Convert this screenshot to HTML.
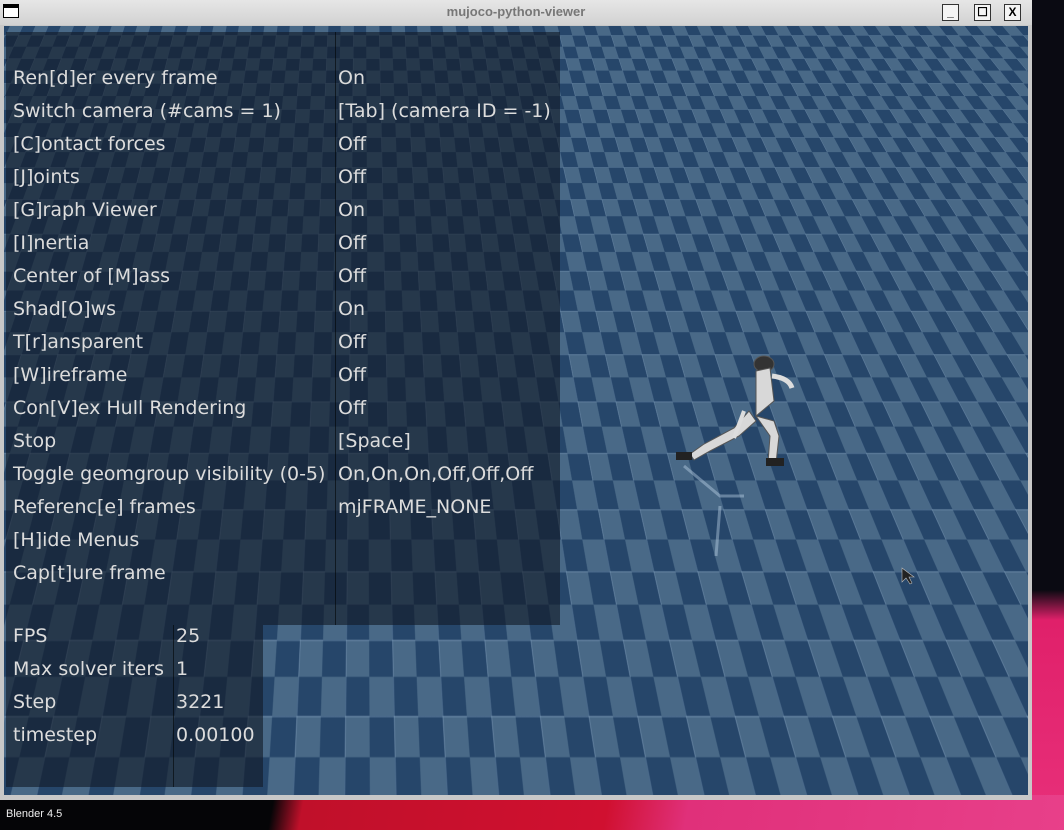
<!DOCTYPE html>
<html><head><style>
*{margin:0;padding:0;box-sizing:border-box}
html,body{width:1064px;height:830px;overflow:hidden}
body{background:#050507;position:relative;font-family:"DejaVu Sans","Liberation Sans",sans-serif}
.desk-r{position:absolute;left:1030px;top:0;width:34px;height:830px;background:linear-gradient(#0a0a12 0,#0a0a12 590px,#e0206a 620px,#e8307a 830px)}
.desk-b{position:absolute;left:0;top:795px;width:1064px;height:35px;background:linear-gradient(100deg,#050507 0,#050507 270px,#c0102a 300px,#d01030 600px,#e0307a 680px,#e8408a 1064px)}
.blender{position:absolute;left:6px;top:808px;font:11px "Liberation Sans",sans-serif;color:#eee}
.win{position:absolute;left:0;top:0;width:1032px;height:800px;background:#c8c8c8}
.title{position:absolute;left:0;top:0;width:1032px;height:25px;background:linear-gradient(#e6e6e6,#d2d2d2);text-align:center;font:bold 13px "Liberation Sans",sans-serif;color:#777;line-height:24px}
.ic{position:absolute;top:4px;width:17px;height:17px;border:1px solid #333;background:#f4f4f4;font:bold 12px "Liberation Sans";color:#000;line-height:15px;text-align:center}
.view{position:absolute;left:4px;top:26px;width:1024px;height:769px;overflow:hidden;clip-path:inset(0);background:#3a5a7c;perspective:800px;perspective-origin:35% -400px}
.plane{position:absolute;left:-2000px;bottom:-20px;width:5000px;height:5000px;transform-origin:50% 100%;transform:rotateX(66deg);
background-color:#496987;
background-image:linear-gradient(rgba(140,170,200,.35) 1px,transparent 1px),linear-gradient(90deg,rgba(140,170,200,.35) 1px,transparent 1px),conic-gradient(#26466a 25%,transparent 0 50%,#26466a 0 75%,transparent 0);
background-size:52px 52px,52px 52px,52px 52px}
.panel{position:absolute;background:rgba(18,26,38,.62);color:#e4e4e4;font-size:19px}
.row{position:absolute;height:33px;line-height:33px;white-space:nowrap}
.div{position:absolute;top:0;bottom:0;width:1px;background:rgba(0,0,0,.55)}
</style></head><body>
<div class="desk-r"></div>
<div class="desk-b"></div>
<div class="blender">Blender 4.5</div>
<div class="win">
 <div class="title">mujoco-python-viewer</div>
 <div style="position:absolute;left:3px;top:4px;width:16px;height:14px;border:1px solid #000;background:#fff;border-top:4px solid #000"></div>
 <div class="ic" style="left:942px">_</div>
 <div class="ic" style="left:974px">☐</div>
 <div class="ic" style="left:1004px">X</div>
 <div class="view">
  <div class="plane"></div>
  <svg style="position:absolute;left:0;top:0" width="1024" height="769">
   <g fill="#d8d8d8" stroke="#555" stroke-width="1">
    <ellipse cx="760" cy="338" rx="10" ry="8" fill="#333"/>
    <path d="M752 345 L766 342 L770 375 L752 390 Z"/>
    <path d="M768 350 Q785 352 788 362" fill="none" stroke="#ddd" stroke-width="5"/>
    <path d="M745 385 L730 402 L700 418 L686 428 L690 434 L706 425 L735 410 L752 395 Z"/>
    <path d="M752 390 L770 395 L775 410 L772 437 L764 437 L766 410 Z"/>
    <path d="M740 385 L730 412" stroke="#ddd" stroke-width="4"/>
   </g>
   <rect x="672" y="426" width="16" height="8" fill="#222"/>
   <rect x="762" y="432" width="18" height="8" fill="#222"/>
   <path d="M680 440 L716 470 L740 470 M716 480 L712 530" stroke="rgba(200,220,240,.4)" stroke-width="3" fill="none"/>
   <path d="M898 542 L898 556 L902 552 L906 558 L908 557 L905 551 L910 551 Z" fill="#222" stroke="#bbb" stroke-width=".6"/>
  </svg>
  <div class="panel" style="left:2px;top:6px;width:554px;height:593px">
   <div class="div" style="left:329px"></div>
  </div>
  <div class="panel" style="left:2px;top:599px;width:257px;height:162px">
   <div class="div" style="left:167px"></div>
  </div>
  <div style="position:absolute;left:0;top:0;color:#dcdcdc;font-size:19px">
   <div class="row" style="left:9px;top:36px">Ren[d]er every frame</div><div class="row" style="left:334px;top:36px">On</div>
   <div class="row" style="left:9px;top:69px">Switch camera (#cams = 1)</div><div class="row" style="left:334px;top:69px">[Tab] (camera ID = -1)</div>
   <div class="row" style="left:9px;top:102px">[C]ontact forces</div><div class="row" style="left:334px;top:102px">Off</div>
   <div class="row" style="left:9px;top:135px">[J]oints</div><div class="row" style="left:334px;top:135px">Off</div>
   <div class="row" style="left:9px;top:168px">[G]raph Viewer</div><div class="row" style="left:334px;top:168px">On</div>
   <div class="row" style="left:9px;top:201px">[I]nertia</div><div class="row" style="left:334px;top:201px">Off</div>
   <div class="row" style="left:9px;top:234px">Center of [M]ass</div><div class="row" style="left:334px;top:234px">Off</div>
   <div class="row" style="left:9px;top:267px">Shad[O]ws</div><div class="row" style="left:334px;top:267px">On</div>
   <div class="row" style="left:9px;top:300px">T[r]ansparent</div><div class="row" style="left:334px;top:300px">Off</div>
   <div class="row" style="left:9px;top:333px">[W]ireframe</div><div class="row" style="left:334px;top:333px">Off</div>
   <div class="row" style="left:9px;top:366px">Con[V]ex Hull Rendering</div><div class="row" style="left:334px;top:366px">Off</div>
   <div class="row" style="left:9px;top:399px">Stop</div><div class="row" style="left:334px;top:399px">[Space]</div>
   <div class="row" style="left:9px;top:432px">Toggle geomgroup visibility (0-5)</div><div class="row" style="left:334px;top:432px">On,On,On,Off,Off,Off</div>
   <div class="row" style="left:9px;top:465px">Referenc[e] frames</div><div class="row" style="left:334px;top:465px">mjFRAME_NONE</div>
   <div class="row" style="left:9px;top:498px">[H]ide Menus</div>
   <div class="row" style="left:9px;top:531px">Cap[t]ure frame</div>
   <div class="row" style="left:9px;top:594px">FPS</div><div class="row" style="left:172px;top:594px">25</div>
   <div class="row" style="left:9px;top:627px">Max solver iters</div><div class="row" style="left:172px;top:627px">1</div>
   <div class="row" style="left:9px;top:660px">Step</div><div class="row" style="left:172px;top:660px">3221</div>
   <div class="row" style="left:9px;top:693px">timestep</div><div class="row" style="left:172px;top:693px">0.00100</div>
  </div>
 </div>
</div>
</body></html>
